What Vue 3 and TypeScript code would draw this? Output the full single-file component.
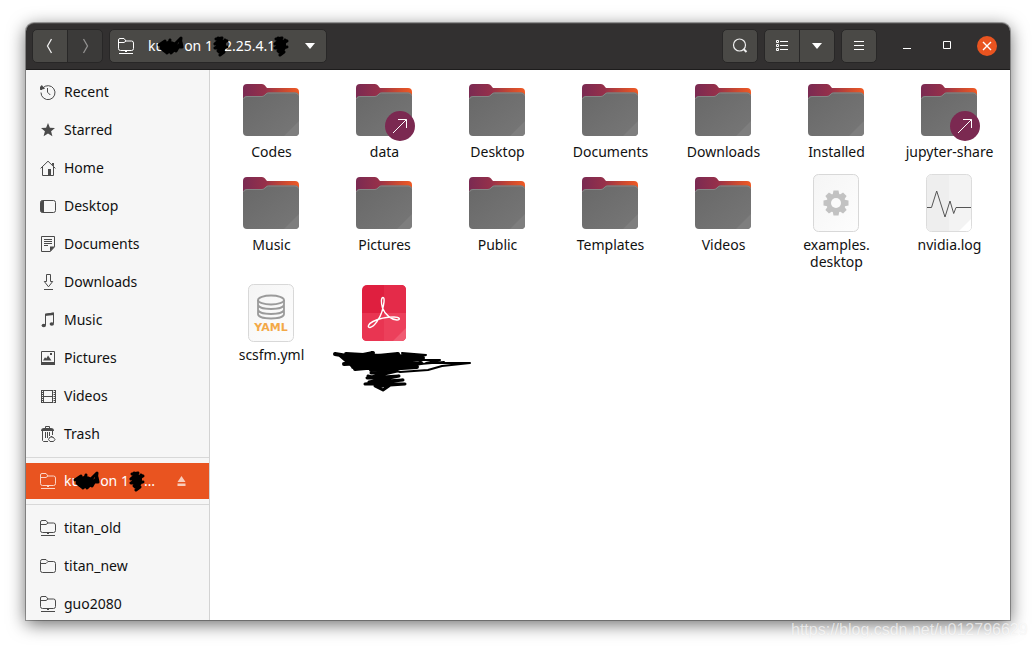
<script setup lang="ts">
interface Place {
  name: string
  icon: string
}
interface Entry {
  lines: string[]
  icon: string
  link?: boolean
  redacted?: boolean
}

const places: Place[] = [
  { name: 'Recent', icon: 'recent' },
  { name: 'Starred', icon: 'star' },
  { name: 'Home', icon: 'home' },
  { name: 'Desktop', icon: 'desktop' },
  { name: 'Documents', icon: 'document' },
  { name: 'Downloads', icon: 'download' },
  { name: 'Music', icon: 'music' },
  { name: 'Pictures', icon: 'picture' },
  { name: 'Videos', icon: 'video' },
  { name: 'Trash', icon: 'trash' },
]

const bookmarks: Place[] = [
  { name: 'titan_old', icon: 'remote' },
  { name: 'titan_new', icon: 'folder-line' },
  { name: 'guo2080', icon: 'remote' },
]

const entries: Entry[] = [
  { lines: ['Codes'], icon: 'folder' },
  { lines: ['data'], icon: 'folder', link: true },
  { lines: ['Desktop'], icon: 'folder' },
  { lines: ['Documents'], icon: 'folder' },
  { lines: ['Downloads'], icon: 'folder' },
  { lines: ['Installed'], icon: 'folder' },
  { lines: ['jupyter-share'], icon: 'folder', link: true },
  { lines: ['Music'], icon: 'folder' },
  { lines: ['Pictures'], icon: 'folder' },
  { lines: ['Public'], icon: 'folder' },
  { lines: ['Templates'], icon: 'folder' },
  { lines: ['Videos'], icon: 'folder' },
  { lines: ['examples.', 'desktop'], icon: 'gear' },
  { lines: ['nvidia.log'], icon: 'log' },
  { lines: ['scsfm.yml'], icon: 'yaml' },
  { lines: [], icon: 'pdf', redacted: true },
]
</script>

<template>
  <div class="page">
    <svg class="sprite" aria-hidden="true">
      <defs>
        <linearGradient id="g-back" x1="0" y1="0" x2="1" y2="0">
          <stop offset="0" stop-color="#7a2a52" />
          <stop offset=".4" stop-color="#96304a" />
          <stop offset=".75" stop-color="#cc4a30" />
          <stop offset="1" stop-color="#f05a24" />
        </linearGradient>
        <linearGradient id="g-front" x1="0" y1="0" x2="1" y2="1">
          <stop offset="0" stop-color="#686868" />
          <stop offset="1" stop-color="#777" />
        </linearGradient>
        <linearGradient id="g-paper" x1="0" y1="0" x2="1" y2="1">
          <stop offset="0" stop-color="#f5f5f5" />
          <stop offset="1" stop-color="#fdfdfd" />
        </linearGradient>
      </defs>

      <symbol id="recent" viewBox="0 0 16 16">
        <path d="M2.6 4.2A7 7 0 1 1 1 8.5M1 5.5h1" fill="none" stroke="currentColor" />
        <path d="M0 3l1.8-2L5 4.8 0 6z" fill="currentColor" />
        <path d="M7.5 4v4.2l2.8 2.8" fill="none" stroke="currentColor" />
      </symbol>
      <symbol id="star" viewBox="0 0 16 16">
        <path d="M8 1l1.9 4.7 5.1.3-3.9 3.3 1.3 5L8 11.500l-4.400 2.800 1.300-5L1 6l5.100-.3z" fill="currentColor" />
      </symbol>
      <symbol id="home" viewBox="0 0 16 16">
        <path d="M.6 8.4L8 1.2l7.4 7.2M2.5 7v8.5h11V7" fill="none" stroke="currentColor" />
        <path d="M8 9h3v6H8zM12 3h2v3.4l-2-2z" fill="currentColor" />
      </symbol>
      <symbol id="desktop" viewBox="0 0 16 16">
        <rect x=".5" y="2.500" width="15" height="12" rx="2" fill="none" stroke="currentColor" />
        <path d="M2 2.500h2v12H2L.5 13V4z" fill="currentColor" />
      </symbol>
      <symbol id="document" viewBox="0 0 16 16">
        <path d="M1.500.5h13v10.300l-4.200 4.700H1.500zM4 3.500h8M4 5.500h8M4 7.500h8M4 9.500h4" fill="none" stroke="currentColor" />
        <path d="M10 15.500v-5h5z" fill="currentColor" />
      </symbol>
      <symbol id="download" viewBox="0 0 16 16">
        <path d="M6.500.5h4v7h2.200L8.500 12.800 4.300 7.500h2.200zM4 15.500h9" fill="none" stroke="currentColor" />
      </symbol>
      <symbol id="music" viewBox="0 0 16 16">
        <path d="M5.500 13V2.300l8-1.300v10.500" fill="none" stroke="currentColor" />
        <path d="M5 1.700L14 .5V3l-9 1z" fill="currentColor" />
        <ellipse cx="3.800" cy="13.500" rx="2.200" ry="1.800" fill="currentColor" />
        <ellipse cx="11.800" cy="12" rx="2.200" ry="1.800" fill="currentColor" />
      </symbol>
      <symbol id="picture" viewBox="0 0 16 16">
        <path d="M1.500 1.500h13v12h-13z" fill="none" stroke="currentColor" />
        <path d="M1 12h14v3H1zM3 10.500l2-3.300 1.300 1.300L8 5.500l3.500 5zM10 3h2v2h-2z" fill="currentColor" />
      </symbol>
      <symbol id="video" viewBox="0 0 16 16">
        <path d="M3.500 2v13M12.500 2v13M3.500 2.500h9M3.500 8.500h9M3.500 14.500h9" fill="none" stroke="currentColor" />
        <path d="M2 2v13M14.500 2v13" stroke="currentColor" stroke-width="2" stroke-dasharray="1 1" />
        <path d="M1.500 2v13M15.500 2v13" stroke="currentColor" />
      </symbol>
      <symbol id="trash" viewBox="0 0 16 16">
        <path d="M5.500 2.500v-2h4v2M2.500 5v9.500l1 1H8M12.500 5v4M5.500 6v6M7.500 6v6M9.500 6v4" fill="none" stroke="currentColor" />
        <path d="M1 5c0-2 1-3 3-3h7c2 0 3 1 3 3z" fill="currentColor" />
        <path d="M10 15.500l-1.500-2L10 11h3l2 2.500-1.500 2zM11 10l1.500 1.500" fill="none" stroke="currentColor" />
      </symbol>
      <symbol id="folder-line" viewBox="0 0 16 16">
        <path d="M.5 12.500v-9Q.5 1.500 2 1.500h4l2 2h5.500q2 0 2 2v7q0 2-2 2h-11q-2 0-2-2zM.5 5.500H6l2-2" fill="none" stroke="currentColor" />
      </symbol>
      <symbol id="remote" viewBox="0 0 16 16">
        <path d="M.5 10.500V2Q.5.500 2 .500h4L8 3h5.500q2 0 2 2v5.500q0 2-2 2h-11q-2 0-2-2zM.5 4.500H6L8 3M1 15.500h14" fill="none" stroke="currentColor" />
        <path d="M7 13h2v1H7z" fill="currentColor" />
      </symbol>

      <symbol id="folder" viewBox="0 0 64 64">
        <path d="M4 10q0-4 4-4h15q2 0 3 1.500l1.500 2Q28 10 29.500 10H56q4 0 4 4v26H4z" fill="url(#g-back)" />
        <path d="M4 22q0-4 4-4h15q1.500 0 3-1.500l1-1q1-1 2.500-1H56q4 0 4 4V54q0 4-4 4H8q-4 0-4-4z" fill="url(#g-front)" />
        <path d="M4.500 21q.5-2.500 3.500-2.500h15q1.500 0 3-1.500l1-1q1-1 2.500-1H56q3 0 3.500 2.500" fill="none" stroke="#858585" />
        <path d="M45 58l15-15v11q0 4-4 4z" fill="#7e7e7e" />
      </symbol>
      <symbol id="link" viewBox="0 0 64 64">
        <circle cx="48" cy="48" r="15" fill="#7b2951" />
        <path d="M41 55l13.500-13.500M46 41.500h8.500V50" fill="none" stroke="#fff" />
      </symbol>
      <symbol id="gear" viewBox="0 0 64 64">
        <rect x="9.500" y="3.500" width="45" height="57" rx="5" fill="url(#g-paper)" stroke="#d8d8d8" />
        <g fill="#c2c2c2">
          <path v-for="a in [0, 45, 90, 135]" :key="a" d="M29.500 19.500h5l1 5v15l-1 5h-5l-1-5v-15z" :transform="`rotate(${a} 32 32)`" />
          <circle cx="32" cy="32" r="9.500" />
        </g>
        <circle cx="32" cy="32" r="5" fill="#fafafa" />
      </symbol>
      <symbol id="log" viewBox="0 0 64 64">
        <rect x="9.500" y="3.500" width="45" height="57" rx="5" fill="#f3f3f3" stroke="#dcdcdc" />
        <path d="M10 8q0-4 4-4h18v56H14q-4 0-4-4z" fill="#eee" />
        <path d="M42 60l12-12v8q0 4-4 4z" fill="#fff" />
        <path d="M10 36.500h4.500L19.700 20 28 46l5-16 3.700 12.500 2.300-6h15" fill="none" stroke="#555" />
      </symbol>
      <symbol id="yaml" viewBox="0 0 64 64">
        <rect x="9.500" y="3.500" width="45" height="57" rx="5" fill="url(#g-paper)" stroke="#d8d8d8" />
        <g fill="none" stroke="#9b9b9b" stroke-width="1.800">
          <ellipse cx="32" cy="19" rx="13" ry="4.500" />
          <path d="M19 19v14c0 6 26 6 26 0V19M19 23.500c0 6 26 6 26 0M19 28.500c0 6 26 6 26 0" />
        </g>
      </symbol>
      <symbol id="pdf" viewBox="0 0 64 64">
        <rect x="10" y="4" width="44" height="56" rx="5" fill="#df1f3f" />
        <path d="M32 4h17q5 0 5 5v23H32z" fill="#e42b49" />
        <path d="M10 32h22v28H15q-5 0-5-5z" fill="#e93552" />
        <path d="M32 32h22v23q0 5-5 5H32z" fill="#ec405b" />
        <path d="M41 60l13-13v8q0 5-5 5z" fill="#f05b72" />
        <path d="M31 16.500c2 0 1 7-1 14-2 7-8 15.500-12 16-3 0-2-3.500 3-6 7-3.500 15-4.500 21-4.500 6 0 7 3 3 3-5 0-12-5-14.500-12-1.500-5-1.500-10.500.5-10.500z" fill="none" stroke="#fff" stroke-width="1.400" />
      </symbol>

      <symbol id="blot-a" viewBox="0 0 28 22">
        <ellipse cx="13" cy="12" rx="9" ry="6" />
        <path d="M3 10l6-4-4 7 5 4 4-12-3 13 10-11-6 11 9-9-4 7 5-9 1 5M20 8l5-5-1 9" fill="none" stroke="#000" stroke-width="3" stroke-linecap="round" stroke-linejoin="round" />
      </symbol>
      <symbol id="blot-b" viewBox="0 0 18 22">
        <ellipse cx="9" cy="10" rx="5" ry="6" />
        <path d="M4 4l6-1-7 6 12-3-12 7 12-1-9 4 6 1-4 3M6 3l1 14M13 5l-2 12" fill="none" stroke="#000" stroke-width="3" stroke-linecap="round" stroke-linejoin="round" />
      </symbol>
    </svg>

    <main class="window">
      <header class="bar">
        <div class="group">
          <button class="tool" type="button" aria-label="Back">
            <svg class="ico" viewBox="0 0 16 16"><path d="M9.500 1L5.500 8l4 7" fill="none" stroke="#eee" stroke-width="1.300" /></svg>
          </button>
          <button class="tool dim" type="button" aria-label="Forward">
            <svg class="ico" viewBox="0 0 16 16"><path d="M6.500 1l4 7-4 7" fill="none" stroke="#929190" stroke-width="1.300" /></svg>
          </button>
        </div>
        <button class="tool path" type="button">
          <svg class="ico" aria-hidden="true"><use href="#remote" /></svg>
          <span class="path-text">
            <span>ku</span><svg class="blot wide"><use href="#blot-a" /></svg><span>on 1</span><svg class="blot thin"><use href="#blot-b" /></svg><span>2.25.4.1</span><svg class="blot end"><use href="#blot-b" /></svg>
          </span>
          <svg class="caret" viewBox="0 0 10 6"><path d="M0 0h10L5 6z" fill="#fff" /></svg>
        </button>
        <div class="spacer"></div>
        <button class="tool" type="button" aria-label="Search">
          <svg class="ico" viewBox="0 0 16 16"><circle cx="7.500" cy="7" r="6" fill="none" stroke="#eee" stroke-width="1.200" /><path d="M11.500 11l3 3" stroke="#eee" stroke-width="2" /></svg>
        </button>
        <div class="group">
          <button class="tool" type="button" aria-label="List view">
            <svg class="ico" viewBox="0 0 16 16"><path d="M2.500 2.500h2v2h-2zM2.500 6.500h2v2h-2zM2.500 10.500h2v2h-2zM6 3.500h8M6 7.500h8M6 11.500h8" fill="none" stroke="#fff" /></svg>
          </button>
          <button class="tool" type="button" aria-label="View options">
            <svg class="caret" viewBox="0 0 10 6"><path d="M0 0h10L5 6z" fill="#fff" /></svg>
          </button>
        </div>
        <button class="tool" type="button" aria-label="Menu">
          <svg class="ico" viewBox="0 0 16 16"><path d="M3 3.500h10M3 7.500h10M3 11.500h10" stroke="#fff" /></svg>
        </button>
        <div class="controls">
          <button type="button" aria-label="Minimize"><svg class="ico" viewBox="0 0 16 16"><path d="M4 10.500h8" stroke="#fff" /></svg></button>
          <button type="button" aria-label="Maximize"><svg class="ico" viewBox="0 0 16 16"><path d="M4.500 3.500h7v7h-7z" fill="none" stroke="#fff" /></svg></button>
          <button type="button" aria-label="Close"><span class="close"><svg class="ico" viewBox="0 0 16 16"><path d="M4 4l8 8M12 4l-8 8" stroke="#fff" stroke-width="1.400" /></svg></span></button>
        </div>
      </header>

      <div class="body">
        <nav class="side">
          <button v-for="p in places" :key="p.name" type="button" class="place">
            <svg class="ico" aria-hidden="true"><use :href="`#${p.icon}`" /></svg><span class="label">{{ p.name }}</span>
          </button>
          <hr />
          <div class="place active">
            <button type="button" class="mount">
              <svg class="ico soft" aria-hidden="true"><use href="#remote" /></svg>
              <span class="mount-text">
                <span>ku</span><svg class="blot wide"><use href="#blot-a" /></svg><span>on 1</span><svg class="blot thin"><use href="#blot-b" /></svg><span class="dots">…</span>
              </span>
            </button>
            <button type="button" class="eject" aria-label="Eject">
              <svg class="eject-ico" viewBox="0 0 8 10"><path d="M4 0l4 6H0zM0 7.500h8V10H0z" fill="#f9cdbc" /></svg>
            </button>
          </div>
          <hr />
          <button v-for="p in bookmarks" :key="p.name" type="button" class="place">
            <svg class="ico" aria-hidden="true"><use :href="`#${p.icon}`" /></svg><span class="label">{{ p.name }}</span>
          </button>
        </nav>

        <section class="files">
          <figure v-for="(e, i) in entries" :key="i" class="file">
            <svg class="big" viewBox="0 0 64 64">
              <use :href="`#${e.icon}`" />
              <use v-if="e.link" href="#link" />
              <text v-if="e.icon === 'yaml'" x="32" y="50" text-anchor="middle" class="yaml-text">YAML</text>
            </svg>
            <figcaption>
              <span v-for="l in e.lines" :key="l">{{ l }}</span>
              <svg v-if="e.redacted" class="scrawl" viewBox="0 0 142 44" aria-hidden="true">
                <g fill="none" stroke="#000" stroke-linecap="round" stroke-linejoin="round">
                  <path stroke-width="4" d="M3 4l18 3 20-4-25 6 50-5-48 8 62-7-60 10 66-9-65 11 70-9-68 11 66-6-50 7 46-3M8 5l14 12M14 4l70 4M25 5l50 12M45 8l35 8M12 14l60-3" />
                  <path stroke-width="2" d="M70 3l24 2-20 5 34 0-14 3 44 0-28 3-14 4-28 2-16-5 60-5" />
                  <path stroke-width="3" d="M39 23l26-2-30 7 32-2-30 6 34-2-38 4 40 0-30 2 8 4 10-7-14 4M36 26l22 6M50 21l-6 14" />
                </g>
              </svg>
            </figcaption>
          </figure>
        </section>
      </div>
    </main>
    <div class="watermark">https://blog.csdn.net/u012796629</div>
  </div>
</template>

<style>
body {
  margin: 0;
  background: #fff;
}
</style>

<style scoped>
.page {
  position: relative;
  box-sizing: border-box;
  height: 100vh;
  padding: 23px 26px 29px;
  overflow: hidden;
  font: 14px/17px 'Noto Sans', 'Open Sans', sans-serif;
  color: #111;
}
.sprite {
  position: absolute;
  width: 0;
  height: 0;
}
.yaml-text {
  font: 700 11px 'DejaVu Sans', sans-serif;
  fill: #f3a847;
}
button {
  font: inherit;
  color: inherit;
  border: 0;
  padding: 0;
  margin: 0;
  background: none;
}
svg {
  display: block;
  flex: none;
}
.ico {
  width: 16px;
  height: 16px;
}
.window {
  display: flex;
  flex-direction: column;
  height: 100%;
  border-radius: 8px 8px 0 0;
  box-shadow: 0 0 0 1px rgba(0, 0, 0, 0.3), 0 4px 18px rgba(0, 0, 0, 0.6);
}
.bar {
  box-sizing: border-box;
  height: 47px;
  flex: none;
  display: flex;
  align-items: center;
  gap: 6px;
  padding: 0 3px 1px 6px;
  background: #323030;
  border-top: 1px solid #4a4848;
  border-bottom: 1px solid #1d1c1c;
  border-radius: 8px 8px 0 0;
  color: #fff;
}
.group {
  display: flex;
}
.tool {
  box-sizing: border-box;
  width: 36px;
  height: 34px;
  display: flex;
  align-items: center;
  justify-content: center;
  background: #4a4946;
  border: 1px solid #282727;
  border-radius: 5px;
}
.group .tool:first-child {
  border-radius: 5px 0 0 5px;
}
.group .tool:last-child {
  border-radius: 0 5px 5px 0;
  margin-left: -1px;
}
.group .dim {
  background: #3b3a39;
}
.path {
  width: 218px;
  justify-content: flex-start;
  padding: 0 11px 0 8px;
}
.path-text,
.mount-text {
  display: flex;
  align-items: center;
  white-space: pre;
}
.path-text {
  margin-left: 14px;
}
.path-text span,
.mount-text span,
.label {
  padding-bottom: 2px;
}
.path .caret {
  margin-left: auto;
}
.blot {
  position: relative;
  width: 18px;
  height: 22px;
}
.wide {
  width: 28px;
  margin: 0 0 0 -8px;
}
.thin {
  margin: 0 -6px 0 -1px;
}
.end {
  margin-left: -3px;
}
.mount-text .dots {
  margin-left: 4px;
}
.caret {
  width: 10px;
  height: 6px;
}
.spacer {
  flex: 1;
}
.controls {
  display: flex;
  margin-left: 4px;
}
.controls button {
  width: 40px;
  height: 34px;
  display: flex;
  align-items: center;
  justify-content: center;
}
.close {
  width: 20px;
  height: 20px;
  display: flex;
  align-items: center;
  justify-content: center;
  border-radius: 50%;
  background: #e95420;
}
.body {
  flex: 1;
  min-height: 0;
  display: flex;
}
.side {
  box-sizing: border-box;
  width: 184px;
  flex: none;
  display: flex;
  flex-direction: column;
  padding-top: 4px;
  overflow: hidden;
  background: #f6f6f6;
  border-right: 1px solid #d3d3d3;
}
.place {
  box-sizing: border-box;
  height: 36px;
  flex: none;
  display: flex;
  align-items: center;
  gap: 8px;
  padding: 0 14px;
  text-align: left;
}
.place + .place {
  margin-top: 2px;
}
.place .ico {
  color: #4a4a4a;
}
hr {
  width: 100%;
  height: 1px;
  flex: none;
  margin: 5px 0;
  border: 0;
  background: #d8d8d8;
}
.active {
  background: #e95420;
  color: #fff;
  padding-right: 23px;
  justify-content: space-between;
}
.mount {
  display: flex;
  align-items: center;
  gap: 8px;
}
.place .soft {
  color: #fbd5c7;
}
.eject-ico {
  width: 9px;
  height: 10px;
}
.files {
  flex: 1;
  min-width: 0;
  display: grid;
  grid-template-columns: repeat(7, 1fr);
  align-content: start;
  row-gap: 11px;
  padding: 8px 5px 0 4px;
  background: #fff;
}
.file {
  margin: 0;
  display: flex;
  flex-direction: column;
  align-items: center;
}
.big {
  width: 64px;
  height: 64px;
}
figcaption {
  position: relative;
  box-sizing: border-box;
  margin-top: 1px;
  padding-left: 2px;
  width: 100%;
  text-align: center;
}
figcaption span {
  display: block;
}
.scrawl {
  position: absolute;
  left: 5px;
  top: 4px;
  width: 142px;
  height: 44px;
}
.watermark {
  position: absolute;
  left: 791px;
  bottom: 10px;
  font: 16px/18px 'Liberation Sans', Arial, sans-serif;
  color: rgba(255, 255, 255, 0.7);
  text-shadow: 0 0 1px rgba(0, 0, 0, 0.08);
  white-space: nowrap;
}
</style>
